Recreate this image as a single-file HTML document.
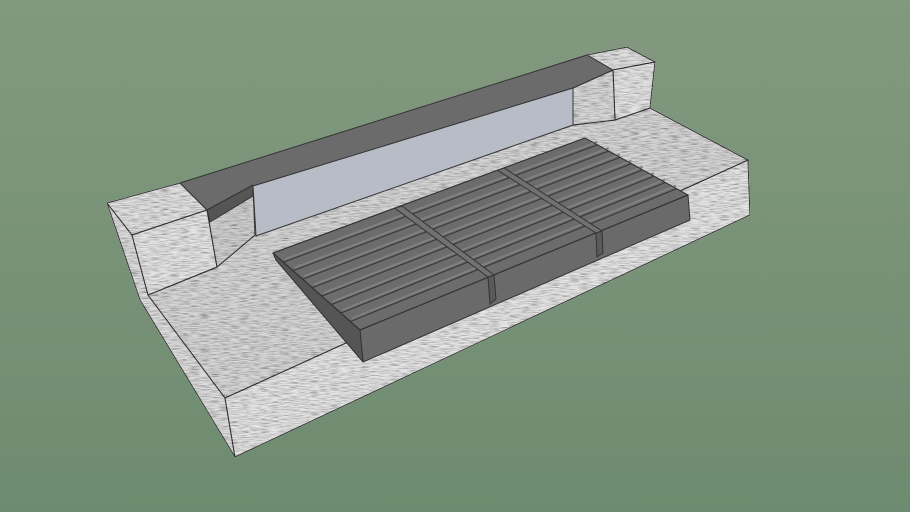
<!DOCTYPE html>
<html><head><meta charset="utf-8"><style>
html,body{margin:0;padding:0;width:910px;height:512px;overflow:hidden;background:#7a937b}
svg{display:block}
</style></head><body>
<svg width="910" height="512" viewBox="0 0 910 512" xmlns="http://www.w3.org/2000/svg">
<defs>
<linearGradient id="bg" x1="0" y1="0" x2="0" y2="1">
<stop offset="0" stop-color="#83997f"/><stop offset="1" stop-color="#6d8b70"/>
</linearGradient>
<filter id="tex" x="0" y="0" width="100%" height="100%">
<feTurbulence type="fractalNoise" baseFrequency="0.1 1.3" numOctaves="2" seed="3" result="n"/>
<feColorMatrix in="n" type="matrix" values="1.5 0 0 0 0.1  1.5 0 0 0 0.1  1.5 0 0 0 0.1  0 0 0 0 1" result="g"/>
<feBlend in="SourceGraphic" in2="g" mode="multiply" result="b"/>
<feComposite in="b" in2="SourceGraphic" operator="in"/>
</filter>
</defs>
<rect width="910" height="512" fill="url(#bg)"/>
<g stroke="#333" stroke-width="1" stroke-linejoin="round" filter="url(#tex)">
<polygon points="107,203 132,235 148,295 225,398 235,457 140,300" fill="#dcdcdc"/>
<polygon points="225,398 748,160 750,215 235,457" fill="#e4e4e4"/>
<polygon points="148,295 217,267 255,235 573,125 615,120 650,108 748,160 225,398" fill="#d6d6d6"/>
<polygon points="107,203 180,183 207,210 132,235" fill="#e0e0e0"/>
<polygon points="132,235 207,210 217,267 148,295" fill="#e4e4e4"/>
<polygon points="207,210 253,187 255,235 217,267" fill="#d0d0d0"/>
<polygon points="587,55 627,47 655,62 613,70" fill="#e0e0e0"/>
<polygon points="613,70 655,62 650,108 615,120" fill="#e4e4e4"/>
<polygon points="573,88 613,70 615,120 573,125" fill="#d8d8d8"/>
</g>
<g stroke="#333" stroke-width="1" stroke-linejoin="round">
<polygon points="180,183 587,55 613,70 573,88 253,187 207,210" fill="#6b6b6b"/>
<polygon points="207,210 253,185 253,196 210,222" fill="#555"/>
<polygon points="253,186 573,88 573,125 256,236" fill="#b7bcc6"/>
<polygon points="273,253 360,330 688,195 585,138" fill="#6c6c6c"/>
<polygon points="360,330 688,195 690,220 363,362" fill="#6a6a6a"/>
<polygon points="273,253 360,330 363,362 276,260" fill="#555"/>
</g>
<g stroke="#808080" stroke-width="2">
<line x1="352" y1="318.5" x2="676" y2="185.7"/>
<line x1="342.5" y1="310.1" x2="665" y2="179.5"/>
<line x1="333" y1="301.6" x2="654" y2="173.2"/>
<line x1="323.3" y1="293.1" x2="642.7" y2="166.9"/>
<line x1="313.8" y1="284.7" x2="631.4" y2="160.7"/>
<line x1="304.2" y1="276.2" x2="620" y2="154.4"/>
<line x1="294.6" y1="267.7" x2="608.7" y2="148.1"/>
<line x1="285" y1="259.2" x2="597.4" y2="141.8"/>
</g>
<g stroke="#3a3a3a" stroke-width="1.2">
<line x1="350.4" y1="321.5" x2="676.7" y2="188.7"/>
<line x1="340.9" y1="313.1" x2="665.3" y2="182.5"/>
<line x1="331.3" y1="304.6" x2="654" y2="176.2"/>
<line x1="321.7" y1="296.1" x2="642.7" y2="169.9"/>
<line x1="312.2" y1="287.7" x2="631.4" y2="163.7"/>
<line x1="302.6" y1="279.2" x2="620" y2="157.4"/>
<line x1="293" y1="270.7" x2="608.7" y2="151.1"/>
<line x1="283.4" y1="262.2" x2="597.4" y2="144.8"/>
</g>
<g stroke="#333" stroke-width="1">
<polygon points="273,253 360,330 688,195 585,138" fill="none"/>
<polygon points="394.7,208.2 402,206 494,275 488,277" fill="#717171"/>
<polygon points="488,277 494,275 496,299 490,304" fill="#5a5a5a"/>
<polygon points="497.6,170.2 504,168 602,231 596,233" fill="#717171"/>
<polygon points="596,233 602,231 603,253 597,257" fill="#5a5a5a"/>
</g>
</svg>
</body></html>
